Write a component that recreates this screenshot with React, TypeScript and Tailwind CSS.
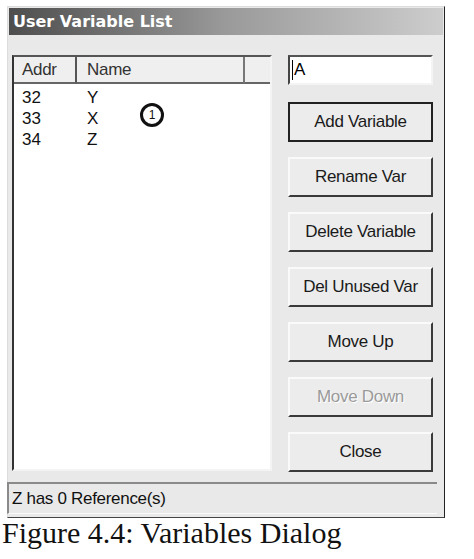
import React from "react";

const rows = [
  { addr: "32", name: "Y" },
  { addr: "33", name: "X" },
  { addr: "34", name: "Z" },
];

const buttons = [
  { label: "Add Variable", isDefault: true },
  { label: "Rename Var" },
  { label: "Delete Variable" },
  { label: "Del Unused Var" },
  { label: "Move Up" },
  { label: "Move Down", disabled: true },
  { label: "Close" },
];

const sans = { fontFamily: '"Liberation Sans", Arial, sans-serif' };

function WinButton({ label, isDefault, disabled }: { label: string; isDefault?: boolean; disabled?: boolean }) {
  return (
    <div
      className={`flex h-[40px] w-[145px] items-center justify-center text-[17px] tracking-[-0.3px] ${
        isDefault
          ? "border-2 border-[#222] bg-[#ececec]"
          : "border-2 border-t-[#fafafa] border-l-[#fafafa] border-r-[#3a3a3a] border-b-[#3a3a3a] bg-[#ececec]"
      } ${disabled ? "text-[#9a9a9a] [text-shadow:1px_1px_0_#ffffff]" : "text-[#1a1a1a]"}`}
    >
      {label}
    </div>
  );
}

export default function App() {
  return (
    <div className="h-[559px] w-[474px] overflow-hidden bg-white" style={sans}>
      {/* Dialog window */}
      <div className="ml-[7px] mt-[6px] flex h-[512px] w-[438px] flex-col border border-t-[#dcdcdc] border-l-[#dcdcdc] border-r-[#222] border-b-[#444] bg-[#e9e9e9] p-[1px]">
        <div
          className="flex h-[27px] items-center bg-gradient-to-r from-[#4e4e4e] via-[#9a9a9a] to-[#cdcdcd] px-[4px] text-[16px] font-bold text-white"
          style={{ fontFamily: '"DejaVu Sans", Verdana, sans-serif' }}
        >
          User Variable List
        </div>

        <div className="flex flex-1 gap-[16px] pl-[3px] pt-[20px]">
          {/* List view */}
          <div className="relative flex h-[416px] w-[260px] flex-col border-2 border-t-[#555] border-l-[#333] border-r-[#f4f4f4] border-b-[#f4f4f4] bg-white">
            <div className="flex h-[27px] text-[17px] tracking-[-0.3px] text-[#333]">
              <div className="flex w-[63px] items-center border-r-2 border-b-2 border-r-[#555] border-b-[#666] bg-[#efefef] pl-[8px]">
                Addr
              </div>
              <div className="flex w-[168px] items-center border-r-2 border-b-2 border-r-[#777] border-b-[#666] bg-[#efefef] pl-[10px]">
                Name
              </div>
              <div className="flex-1 border-b-2 border-b-[#666] bg-[#efefef]" />
            </div>
            <div className="pt-[3px] text-[17px] text-[#111]">
              {rows.map((r) => (
                <div key={r.addr} className="flex h-[21px] items-center leading-none">
                  <div className="w-[63px] pl-[8px]">{r.addr}</div>
                  <div className="pl-[10px]">{r.name}</div>
                </div>
              ))}
            </div>
            {/* annotation marker */}
            <div className="absolute left-[126px] top-[46px] flex h-[24px] w-[24px] items-center justify-center rounded-full border-[3px] border-[#111] text-[12px] leading-none text-[#111]">
              1
            </div>
          </div>

          {/* Right column */}
          <div className="flex flex-col">
            <div className="flex h-[30px] w-[145px] items-center border-2 border-t-[#555] border-l-[#444] border-r-[#f4f4f4] border-b-[#f4f4f4] bg-white pl-[2px] text-[17px]">
              <span className="mr-[1px] h-[20px] w-[1px] bg-black" />
              A
            </div>
            <div className="mt-[17px] flex flex-col gap-[15px]">
              {buttons.map((b) => (
                <WinButton key={b.label} {...b} />
              ))}
            </div>
          </div>
        </div>

        {/* Status bar */}
        <div className="mb-[2px] ml-[-2px] flex h-[32px] w-[430px] items-center border-t-2 border-l-2 border-t-[#8a8a8a] border-l-[#8a8a8a] border-b border-b-[#fafafa] pl-[3px] text-[17px] tracking-[-0.3px] text-[#111]">
          Z has 0 Reference(s)
        </div>
      </div>

      <div
        className="ml-[2px] text-[30px] leading-[30px] text-[#111]"
        style={{ fontFamily: '"Liberation Serif", "Times New Roman", serif' }}
      >
        Figure 4.4: Variables Dialog
      </div>
    </div>
  );
}
